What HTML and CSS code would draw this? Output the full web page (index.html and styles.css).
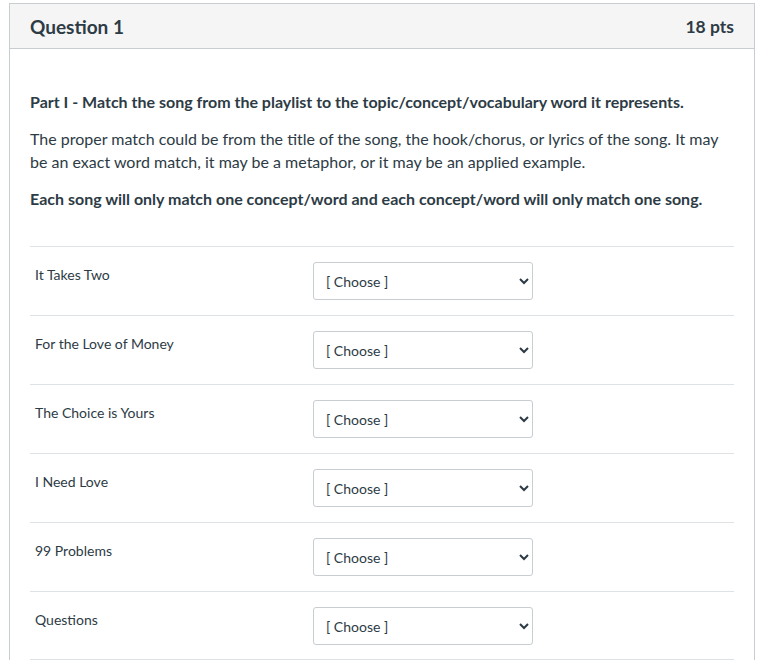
FILE: index.html
```html
<!DOCTYPE html>
<html lang="en">
<head>
    <meta charset="UTF-8">
    <meta name="viewport" content="width=device-width, initial-scale=1.0">
    <title>Quiz - Question 1</title>
    <link rel="stylesheet" href="styles.css">
</head>
<body>
    <div class="question">
        <div class="question-header">
            <span class="question-name">Question 1</span>
            <span class="question-points">18 pts</span>
        </div>

        <div class="question-body">
            <div class="question-text">
                <p class="strong">Part I - Match the song from the playlist to the topic/concept/vocabulary word it represents.</p>
                <p>The proper match could be from the title of the song, the hook/chorus, or lyrics of the song. It may be an exact word match, it may be a metaphor, or it may be an applied example.</p>
                <p class="strong">Each song will only match one concept/word and each concept/word will only match one song.</p>
            </div>

            <div class="answers">
                <div class="answer">
                    <div class="answer-label">It Takes Two</div>
                    <select class="answer-select"><option>[ Choose ]</option></select>
                </div>
                <div class="answer">
                    <div class="answer-label">For the Love of Money</div>
                    <select class="answer-select"><option>[ Choose ]</option></select>
                </div>
                <div class="answer">
                    <div class="answer-label">The Choice is Yours</div>
                    <select class="answer-select"><option>[ Choose ]</option></select>
                </div>
                <div class="answer">
                    <div class="answer-label">I Need Love</div>
                    <select class="answer-select"><option>[ Choose ]</option></select>
                </div>
                <div class="answer">
                    <div class="answer-label">99 Problems</div>
                    <select class="answer-select"><option>[ Choose ]</option></select>
                </div>
                <div class="answer">
                    <div class="answer-label">Questions</div>
                    <select class="answer-select"><option>[ Choose ]</option></select>
                </div>
            </div>
        </div>
    </div>
</body>
</html>
```

FILE: styles.css
```css
* {
    margin: 0;
    padding: 0;
    box-sizing: border-box;
}

body {
    font-family: Lato, "Open Sans", sans-serif;
    color: #2d3b45;
    background: #fff;
    padding: 3px 13px 0 9px;
}

.question {
    border: 1px solid #c7cdd1;
    border-bottom: none;
    width: 746px;
}

.question-header {
    display: flex;
    justify-content: space-between;
    align-items: center;
    height: 45px;
    padding: 0 20px;
    background: #f5f5f5;
    border-bottom: 1px solid #c7cdd1;
    font-weight: 700;
}

.question-name {
    font-size: 19px;
}

.question-points {
    font-size: 17.5px;
}

.question-body {
    padding: 41px 20px 0;
}

.question-text p {
    font-size: 16px;
    line-height: 23px;
    margin-bottom: 14px;
}

.question-text .strong {
    font-weight: 700;
}

.answers {
    margin-top: 36px;
}

/* one song per row: title on the left, dropdown on the right */
.answer {
    display: grid;
    grid-template-columns: 283px 220px;
    border-top: 1px solid #dfe2e4;
    height: 69px;
    padding-top: 15px;
}

.answer:last-child {
    border-bottom: 1px solid #dfe2e4;
}

.answer-label {
    font-size: 14px;
    padding: 4px 5px 0;
    line-height: 18px;
}

.answer-select {
    height: 38px;
    font-family: inherit;
    font-size: 14px;
    color: #2d3b45;
    background: #fff;
    border: 1px solid #c7cdd1;
    border-radius: 3px;
    padding: 0 8px;
}
```
